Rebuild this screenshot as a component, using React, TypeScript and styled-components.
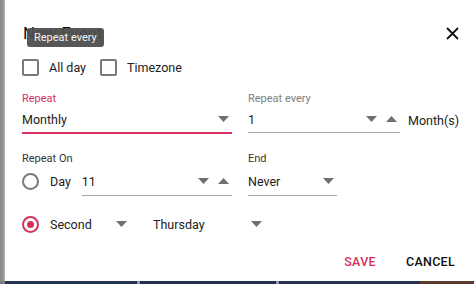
import styled, { createGlobalStyle } from 'styled-components';

const GlobalStyle = createGlobalStyle`
  html, body {
    margin: 0;
    padding: 0;
    background: #ffffff;
    font-family: Roboto, "Liberation Sans", Arial, sans-serif;
  }
`;

const PINK = '#d6305e';
const GRAY = '#7a7a7a';
const TEXT = '#222222';

const Page = styled.div`
  width: 474px;
  height: 284px;
  display: flex;
  flex-direction: column;
  overflow: hidden;
`;

const Main = styled.div`
  flex: 1;
  display: flex;
  min-height: 0;
`;

const Edge = styled.div`
  flex: none;
  width: 5px;
  background: linear-gradient(to right, #8a8a8a 0, #9a9a9a 80%, #c8c8c8 100%);
`;

const Dialog = styled.div`
  position: relative;
  flex: 1;
  background: #fff;
  padding: 0 18px 0 17px;
  display: flex;
  flex-direction: column;
  color: ${TEXT};
`;

const Strip = styled.div`
  flex: none;
  height: 3px;
  display: flex;
`;

const StripPart = styled.div<{ $w?: number; $c: string }>`
  ${(p) => (p.$w ? `width: ${p.$w}px; flex: none;` : 'flex: 1;')}
  background: ${(p) => p.$c};
`;

const Header = styled.div`
  margin-top: 20px;
  height: 26px;
  display: flex;
  align-items: center;
  justify-content: space-between;
`;

const Title = styled.h2`
  margin: 0 0 0 1px;
  font-size: 17px;
  font-weight: 400;
  color: #111;
`;

const CloseButton = styled.button`
  border: none;
  background: none;
  padding: 0;
  width: 14px;
  height: 14px;
  display: flex;
  align-items: center;
  justify-content: center;
  cursor: pointer;
`;

const Tooltip = styled.div`
  position: absolute;
  left: 22px;
  top: 28px;
  height: 19px;
  padding: 0 7px;
  display: flex;
  align-items: center;
  background: rgba(78, 78, 78, 0.95);
  border-radius: 3px;
  color: #f2f2f2;
  font-size: 11px;
`;

const CheckRow = styled.div`
  margin-top: 9px;
  height: 24px;
  display: flex;
  align-items: center;
`;

const CheckItem = styled.label`
  display: flex;
  align-items: center;
  gap: 10px;
  margin-right: 14px;
  font-size: 12.5px;
`;

const Box = styled.span`
  width: 13px;
  height: 13px;
  border: 2px solid ${GRAY};
  border-radius: 2px;
  display: inline-block;
`;

const FieldGrid = styled.div<{ $top: number }>`
  margin-top: ${(p) => p.$top}px;
  display: grid;
  grid-template-columns: 210px auto 1fr;
  column-gap: 16px;
  align-items: start;
`;

const Field = styled.div`
  display: flex;
  flex-direction: column;
`;

const Label = styled.div<{ $color: string; $space?: number }>`
  height: 14px;
  line-height: 14px;
  font-size: 11px;
  color: ${(p) => p.$color};
  margin-bottom: ${(p) => p.$space ?? 0}px;
`;

const Control = styled.div<{
  $line: string;
  $thick?: boolean;
  $width?: number;
  $grow?: boolean;
  $h?: number;
}>`
  flex: ${(p) => (p.$grow ? 1 : 'none')};
  height: ${(p) => p.$h ?? 26}px;
  display: flex;
  align-items: center;
  border-bottom: ${(p) => (p.$thick ? 2 : 1)}px solid ${(p) => p.$line};
  font-size: 12.5px;
  ${(p) => (p.$width ? `width: ${p.$width}px;` : '')}
`;

const Value = styled.span`
  flex: 1;
`;

const Arrows = styled.span`
  display: flex;
  align-items: center;
  gap: 9px;
  margin-right: 3px;
`;

const Suffix = styled.div`
  margin-top: 14px;
  height: 26px;
  display: flex;
  align-items: center;
  font-size: 12.5px;
  margin-left: -8px;
  padding-top: 1px;
`;

const OnRow = styled.div`
  display: flex;
  align-items: center;
  gap: 11px;
`;

const Radio = styled.span<{ $on?: boolean }>`
  width: 13px;
  height: 13px;
  border-radius: 50%;
  border: 2px solid ${(p) => (p.$on ? PINK : GRAY)};
  display: inline-flex;
  align-items: center;
  justify-content: center;
  flex: none;
  &::after {
    content: '';
    width: 7px;
    height: 7px;
    border-radius: 50%;
    background: ${(p) => (p.$on ? PINK : 'transparent')};
  }
`;

const Plain = styled.span<{ $w?: number; $left?: number }>`
  font-size: 12.5px;
  ${(p) => (p.$w ? `width: ${p.$w}px;` : '')}
  margin-left: ${(p) => p.$left ?? 0}px;
`;

const WeekRow = styled.div`
  margin-top: 18px;
  height: 20px;
  display: flex;
  align-items: center;
`;

const Actions = styled.div`
  margin-top: 16px;
  display: flex;
  justify-content: flex-end;
  gap: 22px;
  margin-right: 0;
`;

const Action = styled.button<{ $primary?: boolean }>`
  border: none;
  background: none;
  padding: 4px 4px;
  font-family: inherit;
  font-size: 12.5px;
  font-weight: 500;
  letter-spacing: 0.3px;
  color: ${(p) => (p.$primary ? PINK : '#111')};
  cursor: pointer;
`;

function Caret({ up }: { up?: boolean }) {
  return (
    <svg width="11" height="6" viewBox="0 0 11 6">
      <polygon points={up ? '0,6 11,6 5.5,0' : '0,0 11,0 5.5,6'} fill="#6f6f6f" />
    </svg>
  );
}

export default function App() {
  return (
    <Page>
      <GlobalStyle />
      <Main>
        <Edge />
        <Dialog>
          <Header>
            <Title>New Event</Title>
            <CloseButton aria-label="close">
              <svg width="13" height="13" viewBox="0 0 13 13">
                <path d="M1 1 L12 12 M12 1 L1 12" stroke="#111" strokeWidth="1.8" />
              </svg>
            </CloseButton>
          </Header>
          <Tooltip>Repeat every</Tooltip>

          <CheckRow>
            <CheckItem>
              <Box /> All day
            </CheckItem>
            <CheckItem>
              <Box /> Timezone
            </CheckItem>
          </CheckRow>

          <FieldGrid $top={13}>
            <Field>
              <Label $color={PINK}>Repeat</Label>
              <Control $line={PINK} $thick>
                <Value>Monthly</Value>
                <Arrows>
                  <Caret />
                </Arrows>
              </Control>
            </Field>
            <Field>
              <Label $color="#7d7d7d">Repeat every</Label>
              <Control $line="#a8a8a8" $width={152}>
                <Value>1</Value>
                <Arrows>
                  <Caret />
                  <Caret up />
                </Arrows>
              </Control>
            </Field>
            <Suffix>Month(s)</Suffix>
          </FieldGrid>

          <FieldGrid $top={18}>
            <Field>
              <Label $color="#333" $space={1}>Repeat On</Label>
              <OnRow>
                <Radio />
                <Plain>Day</Plain>
                <Control $line="#a8a8a8" $grow $h={28}>
                  <Value>11</Value>
                  <Arrows>
                    <Caret />
                    <Caret up />
                  </Arrows>
                </Control>
              </OnRow>
            </Field>
            <Field>
              <Label $color="#333" $space={1}>End</Label>
              <Control $line="#a8a8a8" $width={89} $h={28}>
                <Value>Never</Value>
                <Arrows>
                  <Caret />
                </Arrows>
              </Control>
            </Field>
          </FieldGrid>

          <WeekRow>
            <Radio $on />
            <Plain $w={66} $left={11}>Second</Plain>
            <Caret />
            <Plain $w={98} $left={26}>Thursday</Plain>
            <Caret />
          </WeekRow>

          <Actions>
            <Action $primary>SAVE</Action>
            <Action>CANCEL</Action>
          </Actions>
        </Dialog>
      </Main>
      <Strip>
        <StripPart $w={5} $c="#7d7d7d" />
        <StripPart $w={132} $c="#253352" />
        <StripPart $w={3} $c="#8e95a3" />
        <StripPart $w={136} $c="#22304d" />
        <StripPart $w={3} $c="#8e95a3" />
        <StripPart $w={141} $c="#25324f" />
        <StripPart $c="#5a3b2e" />
      </Strip>
    </Page>
  );
}
